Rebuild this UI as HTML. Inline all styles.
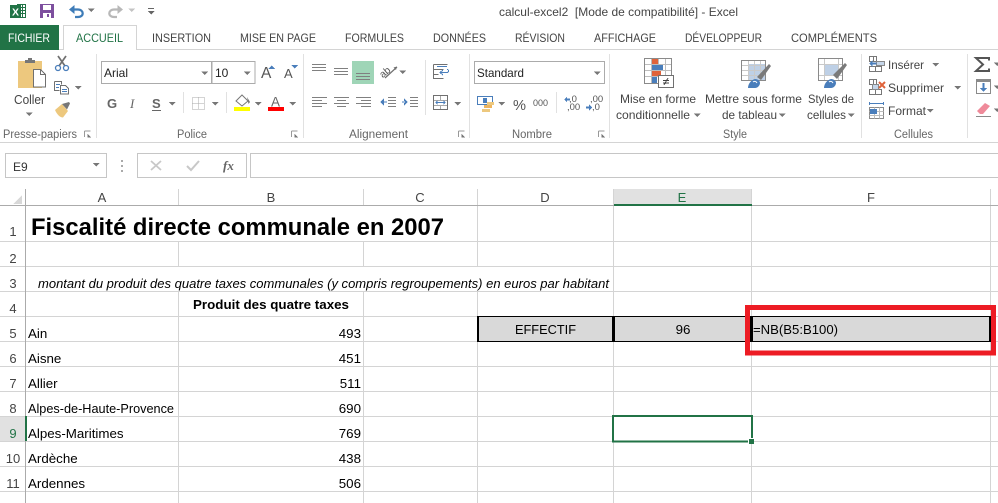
<!DOCTYPE html>
<html lang="fr">
<head>
<meta charset="utf-8">
<title>calcul-excel2 - Excel</title>
<style>
html,body{margin:0;padding:0;background:#fff;width:998px;height:503px;overflow:hidden}
svg{display:block}
text{font-family:"Liberation Sans",Arial,sans-serif;white-space:pre}
.ui{font-size:12px;fill:#444}
.tab{font-size:12px;fill:#444}
.lab{font-size:11.500px;fill:#666}
.hd{font-size:13px;fill:#444}
.c{font-size:13.330px;fill:#000}
.g{stroke:#d4d4d4;stroke-width:1;fill:none}
.s{stroke:#e1e1e1;stroke-width:1;fill:none}
.bx{stroke:#ababab;stroke-width:1;fill:#fff}
.ln{stroke:#808080;stroke-width:1;fill:none}
.blue{fill:#4a7ebb}
</style>
</head>
<body>
<svg width="998" height="503" viewBox="0 0 998 503" xmlns="http://www.w3.org/2000/svg" shape-rendering="crispEdges">
<defs>
<path id="ar" d="M-3.500 -1.500h7l-3.500 3.500z" fill="#777"/>
<g id="launch"><path d="M-3.500 -3.500h6M-3.500 -3.500v6" stroke="#999" fill="none"/><path d="M-0.500 -0.500l3.500 3.500h-3.500z" fill="#777"/></g>
</defs>
<rect width="998" height="503" fill="#fff"/>

<!-- Quick access -->
<g>
<rect x="17.500" y="4.500" width="8" height="13" fill="#fff" stroke="#217346"/>
<path d="M20 7.500h5M20 10.500h5M20 13.500h5M22.500 4v14" stroke="#217346"/>
<rect x="10" y="5" width="11" height="13" fill="#217346"/>
<text x="12" y="15.500" style="font-size:10.500px;font-weight:bold;fill:#fff">X</text>
<rect x="40" y="4" width="14" height="14" fill="#7d4f9e"/>
<rect x="43" y="5" width="8" height="5" fill="#fff"/>
<rect x="43" y="13" width="8" height="5" fill="#fff"/>
<rect x="47" y="14" width="2" height="3" fill="#7d4f9e"/>
<g shape-rendering="auto">
<path d="M72 9.500h6c6 0 6.500 7.500 0 7.500h-3" fill="none" stroke="#3e7cb8" stroke-width="2.200"/>
<path d="M69 9.500l5.500-4.500v9z" fill="#3e7cb8"/>
<path d="M120 9.500h-6c-6 0-6.500 7.500 0 7.500h3" fill="none" stroke="#b8b8b8" stroke-width="2.200"/>
<path d="M123 9.500l-5.500-4.500v9z" fill="#b8b8b8"/>
</g>
<use href="#ar" x="91" y="10"/>
<path d="M128 8.500h7l-3.500 3.500z" fill="#c4c4c4"/>
<path d="M148 8.500h6" stroke="#666"/>
<path d="M147.500 11h7l-3.500 3.500z" fill="#666"/>
</g>
<text x="499" y="16" class="ui" textLength="239" lengthAdjust="spacingAndGlyphs">calcul-excel2  [Mode de compatibilité] - Excel</text>

<!-- Tabs -->
<path d="M0 49.500H998" stroke="#d4d4d4"/>
<rect x="0" y="25" width="59" height="25" fill="#217346"/>
<path d="M63.500 50V25.500H136.500V50" fill="#fff" stroke="#d4d4d4"/>
<rect x="64" y="49" width="72" height="2" fill="#fff"/>
<text x="8" y="42" class="tab" style="fill:#fff" textLength="42" lengthAdjust="spacingAndGlyphs">FICHIER</text>
<text x="76" y="42" class="tab" style="fill:#217346" textLength="47" lengthAdjust="spacingAndGlyphs">ACCUEIL</text>
<text x="152" y="42" class="tab" textLength="59" lengthAdjust="spacingAndGlyphs">INSERTION</text>
<text x="240" y="42" class="tab" textLength="76" lengthAdjust="spacingAndGlyphs">MISE EN PAGE</text>
<text x="345" y="42" class="tab" textLength="59" lengthAdjust="spacingAndGlyphs">FORMULES</text>
<text x="433" y="42" class="tab" textLength="53" lengthAdjust="spacingAndGlyphs">DONNÉES</text>
<text x="515" y="42" class="tab" textLength="50" lengthAdjust="spacingAndGlyphs">RÉVISION</text>
<text x="594" y="42" class="tab" textLength="62" lengthAdjust="spacingAndGlyphs">AFFICHAGE</text>
<text x="685" y="42" class="tab" textLength="77" lengthAdjust="spacingAndGlyphs">DÉVELOPPEUR</text>
<text x="791" y="42" class="tab" textLength="86" lengthAdjust="spacingAndGlyphs">COMPLÉMENTS</text>

<!-- Ribbon structure -->
<path d="M0 142.500H998" stroke="#d4d4d4"/>
<path d="M96.500 54V138M303.500 54V138M469.500 54V138M609.500 54V138M861.500 54V138M967.500 54V138" class="s"/>
<text x="3" y="138" class="lab" textLength="74" lengthAdjust="spacingAndGlyphs">Presse-papiers</text>
<text x="177" y="138" class="lab" textLength="30" lengthAdjust="spacingAndGlyphs">Police</text>
<text x="349" y="138" class="lab" textLength="59" lengthAdjust="spacingAndGlyphs">Alignement</text>
<text x="512" y="138" class="lab" textLength="40" lengthAdjust="spacingAndGlyphs">Nombre</text>
<text x="723" y="138" class="lab" textLength="24" lengthAdjust="spacingAndGlyphs">Style</text>
<text x="894" y="138" class="lab" textLength="39" lengthAdjust="spacingAndGlyphs">Cellules</text>
<use href="#launch" x="88" y="134.500"/>
<use href="#launch" x="295" y="134.500"/>
<use href="#launch" x="462" y="134.500"/>
<use href="#launch" x="602" y="134.500"/>

<!-- Clipboard -->
<rect x="18" y="61" width="24" height="27" fill="#edc87e"/>
<path d="M25 63v-3h3v-2h4v2h3v3z" fill="#777"/>
<path d="M33.500 69.500h7l5 5v12.500h-12z" fill="#fff" stroke="#707070"/>
<path d="M40.500 69.500v5h5" fill="none" stroke="#707070"/>
<text x="14" y="104" class="ui" style="font-size:13px" textLength="31" lengthAdjust="spacingAndGlyphs">Coller</text>
<use href="#ar" x="29" y="114"/>
<g shape-rendering="auto" fill="none">
<path d="M58 56l7 10M66 56l-7 10" stroke="#707070" stroke-width="1.700"/>
<circle cx="58" cy="68" r="2.500" stroke="#4a7ebb" stroke-width="1.300"/>
<circle cx="66" cy="68" r="2.500" stroke="#4a7ebb" stroke-width="1.300"/>
</g>
<path d="M54.500 81.500h7v3M54.500 81.500v9h5" fill="none" stroke="#707070"/>
<path d="M60.500 85.500h5l3 3v5.500h-8z" fill="#fff" stroke="#707070"/>
<path d="M56 84.500h4M56 87.500h3M62 89.500h5M62 91.500h5" stroke="#4a7ebb"/>
<use href="#ar" x="78" y="87.500"/>
<g shape-rendering="auto">
<path d="M55 110l7-6 6 7-5 6.500c-3 0-6-3-8-7.500z" fill="#edc87e"/>
<path d="M62 104l7-2 1 1.500-3 6z" fill="#777"/>
</g>

<!-- Font -->
<rect x="101.500" y="61.500" width="110" height="22" class="bx"/>
<rect x="212" y="61.500" width="43" height="22" class="bx"/>
<text x="104" y="77" class="ui" style="fill:#222">Arial</text>
<text x="215" y="77" class="ui" style="fill:#222">10</text>
<use href="#ar" x="204.500" y="73"/>
<use href="#ar" x="247" y="73"/>
<text x="261" y="78" style="font-size:15.500px;fill:#555">A</text>
<path d="M268 69h7l-3.500-3.500z" fill="#4a7ebb"/>
<text x="284" y="78" style="font-size:13px;fill:#555">A</text>
<path d="M291 65h7l-3.500 3.500z" fill="#4a7ebb"/>
<text x="107" y="108" style="font-size:13px;font-weight:bold;fill:#666">G</text>
<text x="130" y="108" style="font-size:13px;font-style:italic;font-family:'Liberation Serif';fill:#666">I</text>
<text x="152" y="108" style="font-size:13px;font-weight:bold;fill:#666">S</text>
<path d="M152 110.500h9" stroke="#666"/>
<use href="#ar" x="172" y="103.500"/>
<path d="M183.500 92V113" class="s"/>
<path d="M192.500 97.500h12v12h-12zM198.500 97.500v12M192.500 103.500h12" fill="none" stroke="#aaa" stroke-dasharray="1 1"/>
<use href="#ar" x="215" y="103.500"/>
<path d="M226.500 92V113" class="s"/>
<g shape-rendering="auto">
<path d="M236 101l6-6 6 6-6 5z" fill="#fff" stroke="#777"/>
<path d="M247 97l3 5-1.500 2z" fill="#777"/>
</g>
<rect x="234" y="107" width="16" height="4" fill="#ffff00"/>
<use href="#ar" x="258" y="103.500"/>
<text x="271" y="106.500" style="font-size:13.500px;fill:#666">A</text>
<rect x="268" y="107" width="16" height="4" fill="#ff0000"/>
<use href="#ar" x="292.500" y="103.500"/>

<!-- Alignment -->
<rect x="352" y="61" width="22" height="23" fill="#9fd5b7"/>
<path d="M312 64.500h14M312 67.500h14M312 70.500h14" class="ln"/>
<path d="M334 68.500h14M334 71.500h14M334 74.500h14" class="ln"/>
<path d="M356 73.500h14M356 76.500h14M356 79.500h14" class="ln"/>
<g shape-rendering="auto">
<path d="M385 78l12-11" stroke="#707070" stroke-width="1.200"/>
<path d="M397 66.500l-3.500 1 2.500 2.500z" fill="#707070"/>
<text x="379" y="76" transform="rotate(-40 384 72)" style="font-size:10px;fill:#555">ab</text>
</g>
<use href="#ar" x="402.500" y="72"/>
<path d="M312 97.500h15M312 100.500h10M312 103.500h15M312 106.500h10" class="ln"/>
<path d="M334 97.500h15M337 100.500h9M334 103.500h15M337 106.500h9" class="ln"/>
<path d="M356 97.500h15M361 100.500h10M356 103.500h15M361 106.500h10" class="ln"/>
<path d="M388 97.500h8M388 100.500h8M388 103.500h8M388 106.500h8" class="ln"/>
<path d="M380 102l4-3.500v7zM383 101.500h4v1h-4z" class="blue"/>
<path d="M410 97.500h8M410 100.500h8M410 103.500h8M410 106.500h8" class="ln"/>
<path d="M408 102l-4-3.500v7zM402 101.500h3v1h-3z" class="blue"/>
<path d="M425.500 60V115" class="s"/>
<path d="M433.500 64.500h14M433.500 64.500v14h10M433.500 69.500h10M433.500 74.500h5" fill="none" stroke="#707070"/>
<path d="M437 66.500h10" stroke="#4a7ebb"/>
<path d="M440 72.500h7c2 0 2-3 0-3M443 70l-3 2.500 3 2.500" fill="none" stroke="#4a7ebb"/>
<rect x="433.500" y="95.500" width="14" height="14" fill="#fff" stroke="#707070"/>
<path d="M434 100.500h13M434 105.500h13M440.500 96v4M440.500 106v3" stroke="#a8a8a8"/>
<path d="M436 102.500h9" stroke="#4a7ebb"/>
<path d="M435 102.500l2.500-2v4zM446 102.500l-2.500-2v4z" fill="#4a7ebb"/>
<use href="#ar" x="457.500" y="103.500"/>

<!-- Number -->
<rect x="474.500" y="61.500" width="130" height="22" class="bx"/>
<text x="477" y="77" class="ui" style="fill:#222" textLength="47" lengthAdjust="spacingAndGlyphs">Standard</text>
<use href="#ar" x="597" y="73"/>
<rect x="477.500" y="96.500" width="15" height="8" fill="#fff" stroke="#4a7ebb"/>
<rect x="483" y="98" width="4" height="5" fill="#4a7ebb"/>
<rect x="487" y="102" width="7" height="3" fill="#edc87e"/>
<rect x="484" y="105" width="8" height="3" fill="#edb560"/>
<rect x="482" y="109" width="8" height="3" fill="#edc87e"/>
<use href="#ar" x="501.500" y="103.500"/>
<text x="513" y="110" style="font-size:15px;fill:#555" textLength="13" lengthAdjust="spacingAndGlyphs">%</text>
<text x="533" y="106" style="font-size:9px;fill:#555" textLength="15" lengthAdjust="spacingAndGlyphs">000</text>
<path d="M556.500 92V113" class="s"/>
<text x="569" y="102" style="font-size:9.500px;fill:#555">,0</text>
<text x="567" y="110" style="font-size:9.500px;fill:#555">,00</text>
<path d="M564 99.500l3-3v2h3v2h-3v2z" class="blue"/>
<text x="590" y="102" style="font-size:9.500px;fill:#555">,00</text>
<text x="592" y="110" style="font-size:9.500px;fill:#555">,0</text>
<path d="M592 107.500l-3-3v2h-3v2h3v2z" class="blue"/>

<!-- Conditional formatting -->
<rect x="644.500" y="58.500" width="27" height="25" fill="#fff" stroke="#8a8a8a"/>
<path d="M644.500 64.500h27M644.500 70.500h27M644.500 76.500h27M651.500 58.500v25M658.500 58.500v25M665.500 58.500v25" stroke="#bdbdbd"/>
<path d="M644.500 58.500h27v25h-27z" fill="none" stroke="#8a8a8a"/>
<rect x="652" y="59" width="6" height="5" fill="#e0633a"/>
<rect x="652" y="65" width="11" height="5" fill="#4a7ebb"/>
<rect x="652" y="71" width="9" height="5" fill="#e0633a"/>
<rect x="652" y="77" width="5" height="6" fill="#4a7ebb"/>
<rect x="658.500" y="75.500" width="15" height="12" fill="#fff" stroke="#707070"/>
<path d="M663 80.500h6M663 83h6" stroke="#444"/>
<path d="M664 85l4-7" stroke="#444"/>
<text x="620" y="103" class="ui" textLength="76" lengthAdjust="spacingAndGlyphs">Mise en forme</text>
<text x="616" y="119" class="ui" textLength="74" lengthAdjust="spacingAndGlyphs">conditionnelle</text>
<use href="#ar" x="697" y="115"/>

<!-- Table format -->
<rect x="741.500" y="60.500" width="24" height="20" fill="#fff" stroke="#8a8a8a"/>
<rect x="748" y="64" width="18" height="17" fill="#bed0e6"/>
<path d="M741.500 65.500h24M741.500 70.500h24M741.500 75.500h24M748.500 60.500v20M754.500 60.500v20M760.500 60.500v20" stroke="#c9c9c9"/>
<path d="M741.500 60.500h24v20h-24z" fill="none" stroke="#8a8a8a"/>
<g shape-rendering="auto">
<path d="M757 77l12-13 2 2-10 14z" fill="#7a7a7a"/>
<path d="M748 88c0-4 3-8 7-9 3 0 5 2 5 4 0 2-2 5-5 5z" fill="#4a7ebb"/>
<path d="M753 82c1-1 3-1 4 1" fill="none" stroke="#fff"/>
</g>
<text x="705" y="103" class="ui" textLength="97" lengthAdjust="spacingAndGlyphs">Mettre sous forme</text>
<text x="722" y="119" class="ui" textLength="55" lengthAdjust="spacingAndGlyphs">de tableau</text>
<use href="#ar" x="782" y="115"/>

<!-- Cell styles -->
<rect x="818.500" y="58.500" width="24" height="22" fill="#fff" stroke="#8a8a8a"/>
<rect x="824" y="64" width="15" height="11" fill="#bed0e6"/>
<path d="M818.500 64.500h24M818.500 75.500h24M824.500 58.500v22M838.500 58.500v22" stroke="#c9c9c9"/>
<path d="M818.500 58.500h24v22h-24z" fill="none" stroke="#8a8a8a"/>
<g shape-rendering="auto">
<path d="M833 75l12-12 2 2-10 14z" fill="#7a7a7a"/>
<path d="M824 88c0-4 3-8 7-9 3 0 5 2 5 4 0 2-2 5-5 5z" fill="#4a7ebb"/>
<path d="M829 82c1-1 3-1 4 1" fill="none" stroke="#fff"/>
</g>
<text x="808" y="103" class="ui" textLength="46" lengthAdjust="spacingAndGlyphs">Styles de</text>
<text x="807" y="119" class="ui" textLength="39" lengthAdjust="spacingAndGlyphs">cellules</text>
<use href="#ar" x="851" y="115"/>

<!-- Cells group -->
<path d="M869.500 56.500h7v5h-7zM873.500 56.500v5M869.500 66.500h12v5h-12zM875.500 66.500v5" fill="none" stroke="#777"/>
<rect x="876.500" y="61.500" width="8" height="4" fill="#c5d6ea" stroke="#8a8a8a"/>
<path d="M869 63.500l3.500-3v2h4v2h-4v2z" class="blue"/>
<text x="888" y="69" class="ui" textLength="36" lengthAdjust="spacingAndGlyphs">Insérer</text>
<use href="#ar" x="935.500" y="64.500"/>
<path d="M869.500 79.500h7v5h-7zM873.500 79.500v5M869.500 89.500h12v5h-12zM875.500 89.500v5" fill="none" stroke="#777"/>
<rect x="872.500" y="84.500" width="6" height="5" fill="#c5d6ea" stroke="#8a8a8a"/>
<path d="M879 82l6 6M885 82l-6 6" stroke="#e0633a" stroke-width="2" shape-rendering="auto"/>
<text x="888" y="92" class="ui" textLength="56" lengthAdjust="spacingAndGlyphs">Supprimer</text>
<use href="#ar" x="957.500" y="87.500"/>
<rect x="869.500" y="107.500" width="14" height="11" fill="#fff" stroke="#8a8a8a"/>
<path d="M869.500 111.500h14M869.500 115.500h14M874.500 107.500v11M879.500 107.500v11" stroke="#bdbdbd"/>
<rect x="870" y="109" width="7" height="5" fill="#4a7ebb"/>
<path d="M869.500 103.500h14M869.500 102v3M883.500 102v3" stroke="#4a7ebb"/>
<text x="888" y="115" class="ui" textLength="38" lengthAdjust="spacingAndGlyphs">Format</text>
<use href="#ar" x="930" y="110.500"/>

<!-- Editing -->
<path d="M989 60.500v-2.500h-13l7 6.500-7 6.500h13v-2.500" fill="none" stroke="#555" stroke-width="2" shape-rendering="auto"/>
<rect x="976.500" y="79.500" width="14" height="14" fill="#fff" stroke="#8a8a8a"/>
<rect x="976" y="79" width="15" height="3" fill="#8a8a8a"/>
<path d="M982.500 83h2v5h2.500l-3.500 4-3.500-4h2.500z" class="blue"/>
<path d="M977 111l8-8 5 3-7 8h-3z" fill="#ef8a9a" shape-rendering="auto"/>
<path d="M976 116.500h15" stroke="#8a8a8a"/>
<use href="#ar" x="997" y="64"/>
<use href="#ar" x="997" y="87"/>
<use href="#ar" x="997" y="110"/>

<!-- Formula bar -->
<rect x="5.500" y="153.500" width="101" height="24" class="bx" style="stroke:#c6c6c6"/>
<text x="13" y="171" class="ui" style="fill:#333">E9</text>
<use href="#ar" x="96" y="164.500"/>
<path d="M122 160v2M122 165v2M122 170v2" stroke="#aaa" stroke-width="2"/>
<rect x="137.500" y="153.500" width="109" height="24" class="bx" style="stroke:#c6c6c6"/>
<rect x="250.500" y="153.500" width="750" height="24" class="bx" style="stroke:#c6c6c6"/>
<path d="M151 161l10 9M161 161l-10 9" stroke="#c8c8c8" stroke-width="1.800" shape-rendering="auto"/>
<path d="M187 166l4 4 8-9" fill="none" stroke="#c8c8c8" stroke-width="2" shape-rendering="auto"/>
<text x="223" y="170" style="font-family:'Liberation Serif';font-size:13px;font-style:italic;font-weight:bold;fill:#666">fx</text>

<!-- Grid headers -->
<rect x="614" y="189" width="138" height="16" fill="#e1e1e1"/>
<rect x="0" y="416" width="25" height="25" fill="#e1e1e1"/>
<path d="M13 204h9v-9z" fill="#d8d8d8"/>
<text x="102" y="202" class="hd" text-anchor="middle">A</text>
<text x="271" y="202" class="hd" text-anchor="middle">B</text>
<text x="420" y="202" class="hd" text-anchor="middle">C</text>
<text x="545" y="202" class="hd" text-anchor="middle">D</text>
<text x="682" y="202" class="hd" text-anchor="middle" style="fill:#217346">E</text>
<text x="871" y="202" class="hd" text-anchor="middle">F</text>

<!-- Gridlines -->
<path class="g" d="M0 241.500H998M0 266.500H998M0 291.500H998M0 316.500H998M0 341.500H998M0 366.500H998M0 391.500H998M0 416.500H998M0 441.500H998M0 466.500H998M0 491.500H998"/>
<path class="g" d="M178.500 189V205M178.500 241V266M178.500 291V503M363.500 189V205M363.500 241V266M363.500 291V503M477.500 189V266M477.500 291V503M613.500 189V503M751.500 189V503M990.500 189V503"/>
<path d="M0 205.500H998" stroke="#ababab"/>
<path d="M25.500 189V503" stroke="#ababab"/>
<rect x="614" y="204" width="138" height="2" fill="#217346"/>
<rect x="25" y="416" width="2" height="25" fill="#217346"/>

<!-- Row numbers -->
<g text-anchor="middle">
<text x="13" y="236" class="hd">1</text>
<text x="13" y="263" class="hd">2</text>
<text x="13" y="288" class="hd">3</text>
<text x="13" y="313" class="hd">4</text>
<text x="13" y="338" class="hd">5</text>
<text x="13" y="363" class="hd">6</text>
<text x="13" y="388" class="hd">7</text>
<text x="13" y="413" class="hd">8</text>
<text x="13" y="438" class="hd" style="fill:#217346">9</text>
<text x="13" y="463" class="hd">10</text>
<text x="13" y="488" class="hd">11</text>
</g>

<!-- Cell content -->
<text x="31" y="235" style="font-size:24px;font-weight:bold;fill:#000" textLength="413" lengthAdjust="spacingAndGlyphs">Fiscalité directe communale en 2007</text>
<text x="38" y="288" style="font-size:13.330px;font-style:italic;fill:#000" textLength="571" lengthAdjust="spacingAndGlyphs">montant du produit des quatre taxes communales (y compris regroupements) en euros par habitant</text>
<text x="193" y="309" class="c" style="font-weight:bold" textLength="156" lengthAdjust="spacingAndGlyphs">Produit des quatre taxes</text>
<text x="28" y="338" class="c">Ain</text>
<text x="28" y="363" class="c">Aisne</text>
<text x="28" y="388" class="c">Allier</text>
<text x="28" y="413" class="c" textLength="146" lengthAdjust="spacingAndGlyphs">Alpes-de-Haute-Provence</text>
<text x="28" y="438" class="c">Alpes-Maritimes</text>
<text x="28" y="463" class="c">Ardèche</text>
<text x="28" y="488" class="c">Ardennes</text>
<text x="361" y="338" class="c" text-anchor="end">493</text>
<text x="361" y="363" class="c" text-anchor="end">451</text>
<text x="361" y="388" class="c" text-anchor="end">511</text>
<text x="361" y="413" class="c" text-anchor="end">690</text>
<text x="361" y="438" class="c" text-anchor="end">769</text>
<text x="361" y="463" class="c" text-anchor="end">438</text>
<text x="361" y="488" class="c" text-anchor="end">506</text>

<!-- Grey bordered cells -->
<rect x="477" y="316" width="514" height="26" fill="#d9d9d9"/>
<path d="M477 316.500H991M477 341.500H991" stroke="#000"/>
<rect x="477" y="316" width="2" height="26" fill="#000"/>
<rect x="612" y="316" width="3" height="26" fill="#000"/>
<rect x="750" y="316" width="3" height="26" fill="#000"/>
<rect x="989" y="316" width="2" height="26" fill="#000"/>
<text x="515" y="334" class="c" textLength="61" lengthAdjust="spacingAndGlyphs">EFFECTIF</text>
<text x="683" y="334" class="c" text-anchor="middle">96</text>
<text x="753" y="334" class="c" textLength="85" lengthAdjust="spacingAndGlyphs">=NB(B5:B100)</text>

<!-- Selection -->
<rect x="613" y="416" width="139" height="25.500" fill="none" stroke="#217346" stroke-width="2"/>
<rect x="748" y="438" width="6" height="6" fill="#fff"/>
<rect x="749" y="439" width="5" height="5" fill="#217346"/>

<!-- Red highlight -->
<rect x="747.500" y="307.500" width="246" height="45.500" fill="none" stroke="#ed1c24" stroke-width="5"/>
</svg>
</body>
</html>
